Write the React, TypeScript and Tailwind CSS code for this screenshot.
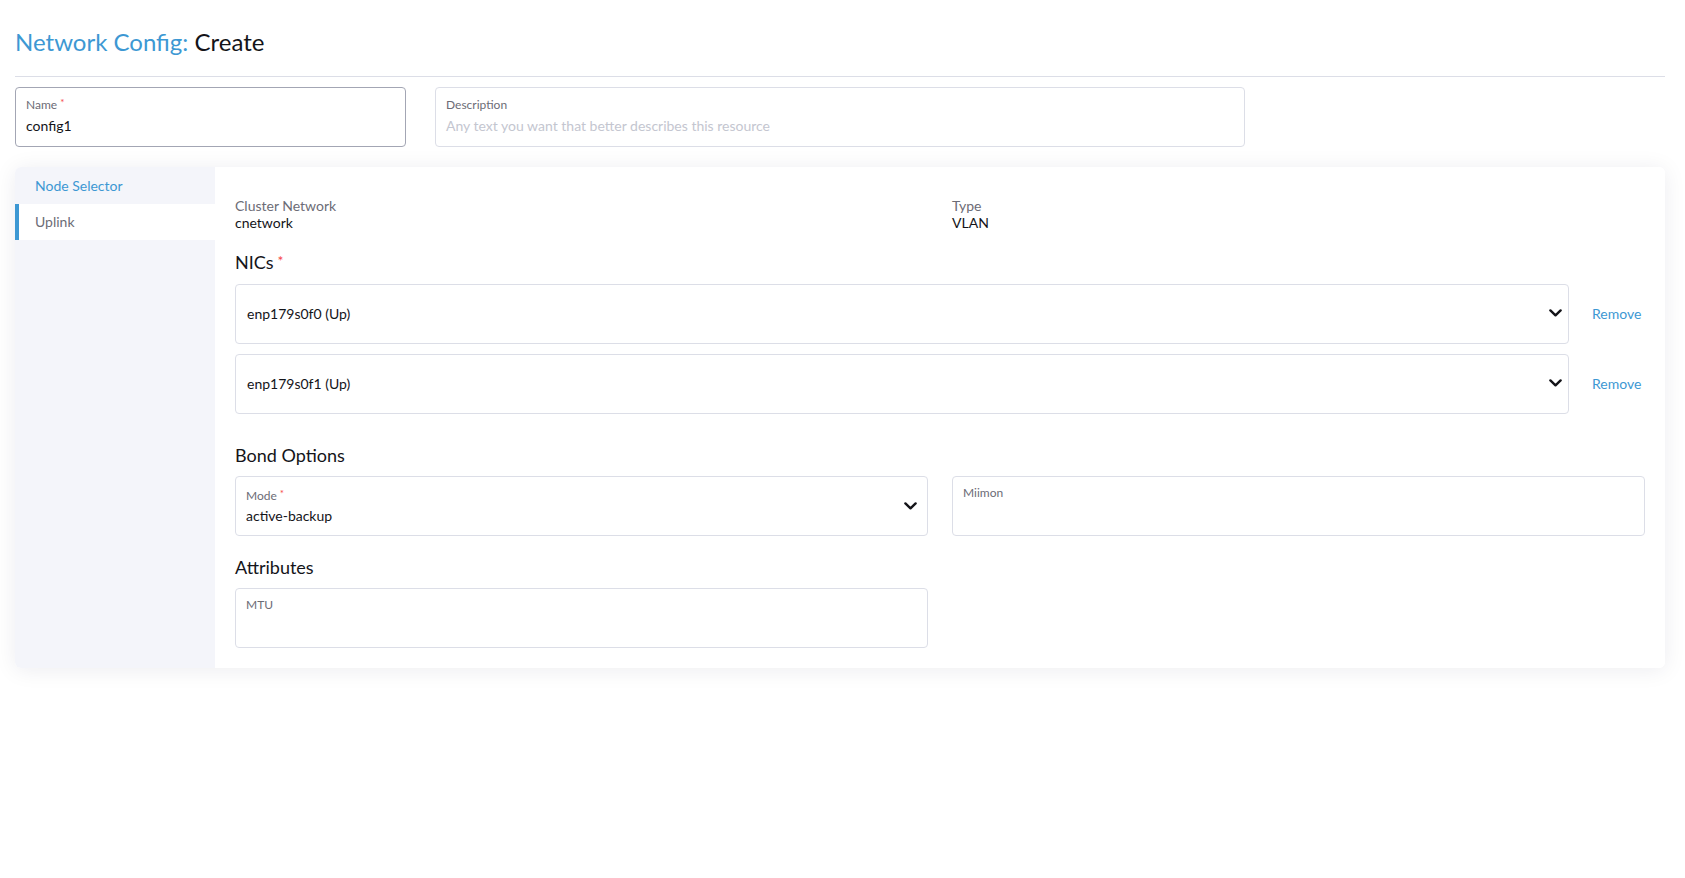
import React from "react";

function Chevron() {
  return (
    <svg width="13" height="8" viewBox="0 0 13 8" fill="none" className="shrink-0">
      <path d="M1.4 1.4L6.5 6.3l5.1-4.9" stroke="#141419" strokeWidth="2.4" strokeLinecap="round" strokeLinejoin="round" />
    </svg>
  );
}

function Req({ big }: { big?: boolean }) {
  return big ? (
    <span className="text-[#f64747] text-[14px] align-top ml-[4px] relative top-[-1px]">*</span>
  ) : (
    <span className="text-[#f64747] text-[10px] align-top ml-[3px] relative top-[-2px]">*</span>
  );
}

function Field({
  label,
  required,
  value,
  placeholder,
  className = "",
  focused,
}: {
  label: string;
  required?: boolean;
  value?: string;
  placeholder?: string;
  className?: string;
  focused?: boolean;
}) {
  return (
    <div
      className={`h-[60px] rounded-[4px] border bg-white px-[10px] pt-[9px] ${
        focused ? "border-[#a3a6b4]" : "border-[#dcdee7]"
      } ${className}`}
    >
      <div className="text-[12px] leading-[15px] text-[#6c6c76]">
        {label}
        {required && <Req />}
      </div>
      <div className="mt-[5px] text-[14px] leading-[18px]">
        {value ? (
          <span className="text-[#141419]">{value}</span>
        ) : (
          <span className="text-[#c4c6d0]">{placeholder}</span>
        )}
      </div>
    </div>
  );
}

export default function App() {
  const nics = ["enp179s0f0 (Up)", "enp179s0f1 (Up)"];

  return (
    <div className="min-h-screen bg-white pl-[15px] pr-[20px] font-['Lato','Noto_Sans',sans-serif] text-[#141419]">
      {/* Header */}
      <div className="pt-[27px] pb-[19px] border-b border-[#dcdee7]">
        <h1 className="text-[24px] leading-[30px] font-normal">
          <span className="text-[#3d98d3]">Network Config:</span> <span>Create</span>
        </h1>
      </div>

      {/* Name / Description */}
      <div className="mt-[10px] flex gap-[29px]">
        <Field label="Name" required value="config1" focused className="w-[391px]" />
        <Field
          label="Description"
          placeholder="Any text you want that better describes this resource"
          className="w-[810px]"
        />
      </div>

      {/* Tabbed panel */}
      <div className="mt-[20px] flex rounded-[6px] overflow-hidden shadow-[0_2px_22px_rgba(20,20,60,0.08)]">
        <div className="w-[200px] shrink-0 bg-[#f4f5fa]">
          <div className="h-[37px] flex items-center pl-[20px] text-[14px] text-[#3d98d3]">Node Selector</div>
          <div className="h-[36px] flex items-center pl-[16px] pb-[1px] border-l-[4px] border-[#3d98d3] bg-white text-[14px] text-[#6c6c76]">
            Uplink
          </div>
        </div>

        <div className="flex-1 bg-white px-[20px] pt-[30px] pb-[20px]">
          <div className="grid grid-cols-2 gap-x-[24px]">
            <div>
              <div className="text-[14px] leading-[17px] text-[#6c6c76]">Cluster Network</div>
              <div className="text-[14px] leading-[17px]">cnetwork</div>
            </div>
            <div>
              <div className="text-[14px] leading-[17px] text-[#6c6c76]">Type</div>
              <div className="text-[14px] leading-[17px]">VLAN</div>
            </div>
          </div>

          <h3 className="mt-[20px] mb-[11px] text-[18px] leading-[22px]">
            NICs<Req big />
          </h3>
          <div className="flex flex-col gap-[10px]">
            {nics.map((n) => (
              <div key={n} className="flex items-center">
                <div className="flex-1 h-[60px] rounded-[4px] border border-[#dcdee7] flex items-center justify-between pl-[11px] pr-[6px] pb-[2px]">
                  <span className="text-[14px]">{n}</span>
                  <Chevron />
                </div>
                <div className="ml-[23px] w-[53px] text-[14px] text-[#3d98d3] pb-[2px]">Remove</div>
              </div>
            ))}
          </div>

          <h3 className="mt-[30px] mb-[10px] text-[18px] leading-[22px]">Bond Options</h3>
          <div className="grid grid-cols-2 gap-x-[24px]">
            <div className="h-[60px] rounded-[4px] border border-[#dcdee7] flex items-center justify-between pl-[10px] pr-[10px]">
              <div className="pt-[1px]">
                <div className="text-[12px] leading-[15px] text-[#6c6c76]">
                  Mode<Req />
                </div>
                <div className="mt-[4px] text-[14px] leading-[18px]">active-backup</div>
              </div>
              <Chevron />
            </div>
            <div className="h-[60px] rounded-[4px] border border-[#dcdee7] px-[10px] pt-[8px]">
              <div className="text-[12px] leading-[15px] text-[#6c6c76]">Miimon</div>
            </div>
          </div>

          <h3 className="mt-[20px] mb-[10px] text-[18px] leading-[22px]">Attributes</h3>
          <div className="grid grid-cols-2 gap-x-[24px]">
            <div className="h-[60px] rounded-[4px] border border-[#dcdee7] px-[10px] pt-[8px]">
              <div className="text-[12px] leading-[15px] text-[#6c6c76]">MTU</div>
            </div>
          </div>
        </div>
      </div>
    </div>
  );
}
